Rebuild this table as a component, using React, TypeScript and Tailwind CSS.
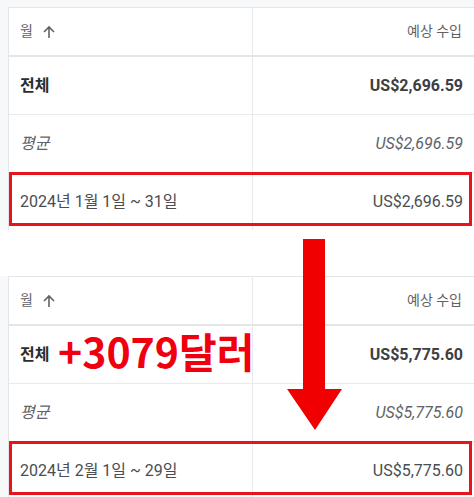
import React from "react";

type TableProps = { total: string; avg: string; date: string };

function ArrowUp() {
  return (
    <svg width="14" height="14" viewBox="0 0 14 14" className="ml-[9px] mt-[1px]">
      <path d="M7 13V2M2 7l5-5 5 5" fill="none" stroke="#5f6368" strokeWidth="1.6" />
    </svg>
  );
}

function Table({ total, avg, date }: TableProps) {
  return (
    <div className="ml-[8px] border-t border-l border-[#e3e5e8] bg-white">
      <div className="grid grid-cols-[244px_1fr] h-[49px] border-b-2 border-[#e3e5e8]">
        <div className="flex items-center pl-[11px] text-[14px] text-[#5f6368] border-r border-[#e8eaed]">
          <span>월</span>
          <ArrowUp />
        </div>
        <div className="flex items-center justify-end pr-[12px] text-[14px] text-[#5f6368]">예상 수입</div>
      </div>
      <div className="grid grid-cols-[244px_1fr] h-[58px] border-b border-[#e8eaed]">
        <div className="flex items-center pl-[11px] text-[16px] font-bold text-[#2b2d30] border-r border-[#e8eaed]">전체</div>
        <div className="flex items-center justify-end pr-[11px] text-[16px] font-bold text-[#3c4043]">{total}</div>
      </div>
      <div className="grid grid-cols-[244px_1fr] h-[58px] border-b border-[#e8eaed]">
        <div className="flex items-center pl-[11px] text-[16px] italic text-[#5f6368] border-r border-[#e8eaed]">평균</div>
        <div className="flex items-center justify-end pr-[11px] text-[16px] italic text-[#5f6368]">{avg}</div>
      </div>
      <div className="relative grid grid-cols-[244px_1fr] h-[57px]">
        <div className="flex items-center pl-[11px] text-[16px] text-[#4a4d51] border-r border-[#e8eaed]">{date}</div>
        <div className="flex items-center justify-end pr-[11px] text-[16px] text-[#4a4d51]">{total}</div>
        <div className="absolute left-0 top-[-1px] w-[463px] h-[54px] border-[3px] border-[#e8141b] pointer-events-none" />
      </div>
    </div>
  );
}

export default function App() {
  return (
    <div
      className="relative w-[474px] h-[497px] overflow-hidden bg-[#f7f8f9]"
      style={{ fontFamily: "Roboto, 'Noto Sans CJK KR', sans-serif" }}
    >
      <div className="pt-[7px]">
        <Table total="US$2,696.59" avg="US$2,696.59" date="2024년 1월 1일 ~ 31일" />
      </div>
      <div className="h-[46px] bg-white" />
      <div>
        <Table total="US$5,775.60" avg="US$5,775.60" date="2024년 2월 1일 ~ 29일" />
      </div>
      <div
        className="absolute left-[58px] top-[330px] text-[41px] font-bold text-[#f0000f] leading-none"
        style={{ fontFamily: "'Noto Sans CJK KR', sans-serif" }}
      >
        +3079달러
      </div>
      <svg className="absolute left-[285px] top-[238px]" width="60" height="195" viewBox="0 0 60 195">
        <polygon points="18,1 40,1 40,151 57,151 30,192 2,151 18,151" fill="#f00000" />
      </svg>
    </div>
  );
}
